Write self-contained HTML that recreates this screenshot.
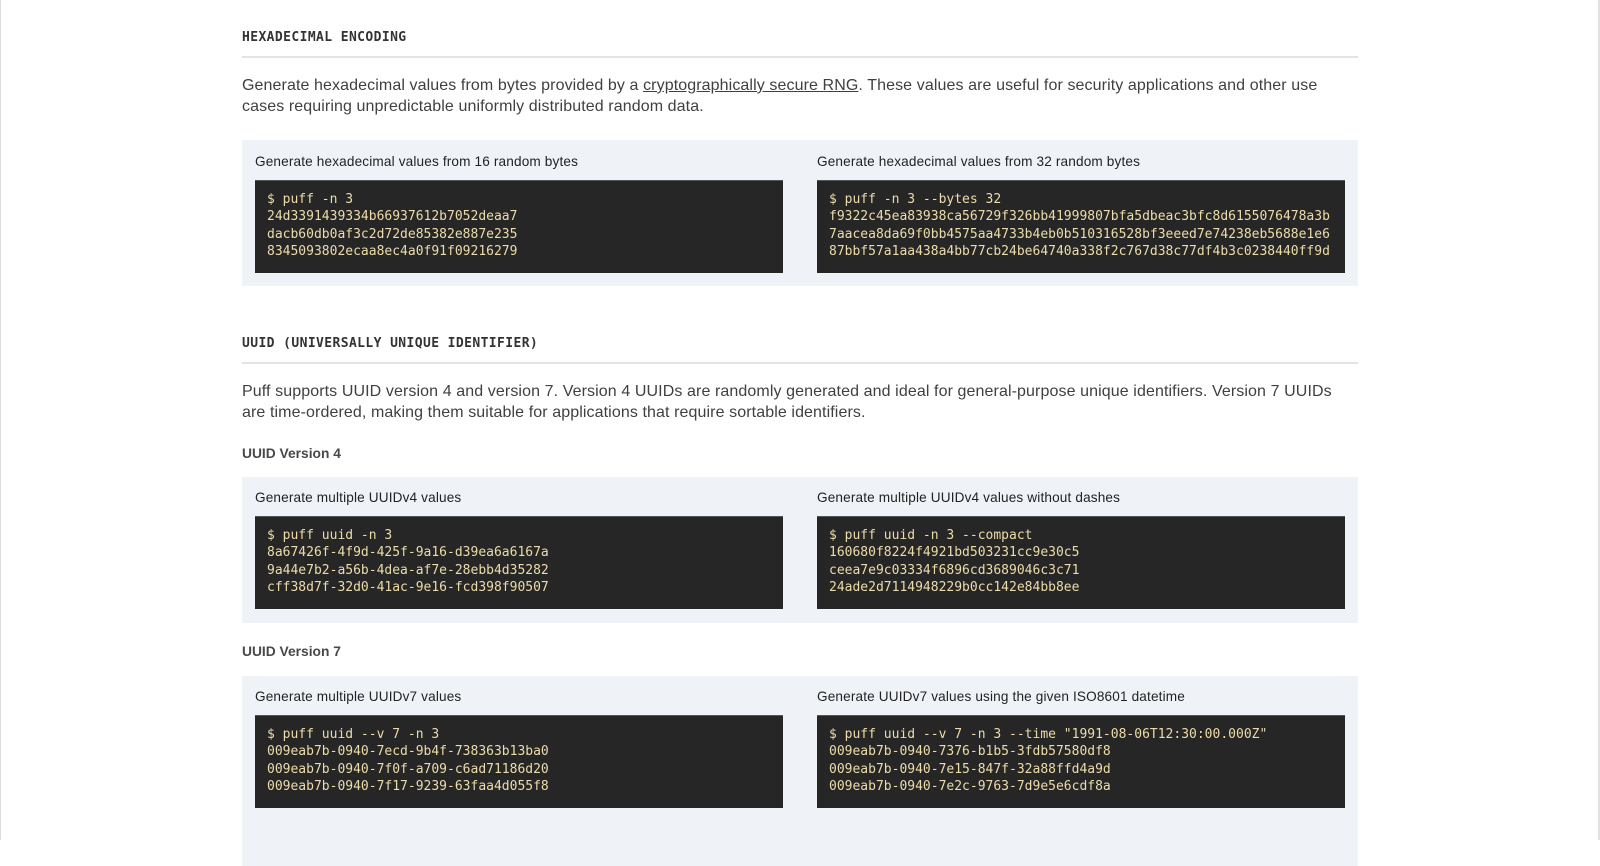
<!DOCTYPE html>
<html><head><meta charset="utf-8"><style>
*{margin:0;padding:0;box-sizing:border-box}
body{width:1600px;height:840px;background:#fff;position:relative;overflow:hidden;font-family:"Liberation Sans",sans-serif;color:#3a3a3a}
.lb{position:absolute;left:0;top:0;width:1px;height:840px;background:#ddd}
.rb{position:absolute;left:1598px;top:0;width:2px;height:840px;background:#e2e2e2}
h2{position:absolute;left:242px;font:bold 13px/16px "DejaVu Sans Mono","Liberation Mono",monospace;color:#333;letter-spacing:0.4px}
.rule{position:absolute;left:242px;width:1116px;height:2px;background:#e4e4e4}
p{position:absolute;left:242px;width:1140px;font-size:16px;line-height:21.4px;color:#404040;letter-spacing:0.1px;white-space:nowrap}
p a{color:#404040;text-decoration:underline}
h3{position:absolute;left:242px;font-size:13.8px;font-weight:bold;color:#484848;line-height:16px}
.box{position:absolute;left:242px;width:1116px;background:#eff3f8}
.lbl{position:absolute;font-size:13.6px;color:#222;line-height:16px;letter-spacing:0.15px}
pre{position:absolute;width:528px;height:93px;background:#262626;border-top:1px solid #555;padding:10px 12px 0;font:13px/17.35px "DejaVu Sans Mono","Liberation Mono",monospace;color:#ecdcaa;white-space:pre;overflow:hidden}
</style></head><body>
<div class="lb"></div><div class="rb"></div>

<h2 style="top:30px">HEXADECIMAL ENCODING</h2>
<div class="rule" style="top:56px"></div>
<p style="top:75px">Generate hexadecimal values from bytes provided by a <a>cryptographically secure RNG</a>. These values are useful for security applications and other use<br>cases requiring unpredictable uniformly distributed random data.</p>
<div class="box" style="top:140px;height:146px"></div>
<div class="lbl" style="left:255px;top:154px">Generate hexadecimal values from 16 random bytes</div>
<div class="lbl" style="left:817px;top:154px">Generate hexadecimal values from 32 random bytes</div>
<pre style="left:255px;top:180px">$ puff -n 3
24d3391439334b66937612b7052deaa7
dacb60db0af3c2d72de85382e887e235
8345093802ecaa8ec4a0f91f09216279</pre>
<pre style="left:817px;top:180px">$ puff -n 3 --bytes 32
f9322c45ea83938ca56729f326bb41999807bfa5dbeac3bfc8d6155076478a3b
7aacea8da69f0bb4575aa4733b4eb0b510316528bf3eeed7e74238eb5688e1e6
87bbf57a1aa438a4bb77cb24be64740a338f2c767d38c77df4b3c0238440ff9d</pre>

<h2 style="top:336px">UUID (UNIVERSALLY UNIQUE IDENTIFIER)</h2>
<div class="rule" style="top:362px"></div>
<p style="top:381px">Puff supports UUID version 4 and version 7. Version 4 UUIDs are randomly generated and ideal for general-purpose unique identifiers. Version 7 UUIDs<br>are time-ordered, making them suitable for applications that require sortable identifiers.</p>
<h3 style="top:446px">UUID Version 4</h3>
<div class="box" style="top:477px;height:146px"></div>
<div class="lbl" style="left:255px;top:490px">Generate multiple UUIDv4 values</div>
<div class="lbl" style="left:817px;top:490px">Generate multiple UUIDv4 values without dashes</div>
<pre style="left:255px;top:516px">$ puff uuid -n 3
8a67426f-4f9d-425f-9a16-d39ea6a6167a
9a44e7b2-a56b-4dea-af7e-28ebb4d35282
cff38d7f-32d0-41ac-9e16-fcd398f90507</pre>
<pre style="left:817px;top:516px">$ puff uuid -n 3 --compact
160680f8224f4921bd503231cc9e30c5
ceea7e9c03334f6896cd3689046c3c71
24ade2d7114948229b0cc142e84bb8ee</pre>

<h3 style="top:644px">UUID Version 7</h3>
<div class="box" style="top:676px;height:190px"></div>
<div class="lbl" style="left:255px;top:689px">Generate multiple UUIDv7 values</div>
<div class="lbl" style="left:817px;top:689px">Generate UUIDv7 values using the given ISO8601 datetime</div>
<pre style="left:255px;top:715px">$ puff uuid --v 7 -n 3
009eab7b-0940-7ecd-9b4f-738363b13ba0
009eab7b-0940-7f0f-a709-c6ad71186d20
009eab7b-0940-7f17-9239-63faa4d055f8</pre>
<pre style="left:817px;top:715px">$ puff uuid --v 7 -n 3 --time "1991-08-06T12:30:00.000Z"
009eab7b-0940-7376-b1b5-3fdb57580df8
009eab7b-0940-7e15-847f-32a88ffd4a9d
009eab7b-0940-7e2c-9763-7d9e5e6cdf8a</pre>
</body></html>
